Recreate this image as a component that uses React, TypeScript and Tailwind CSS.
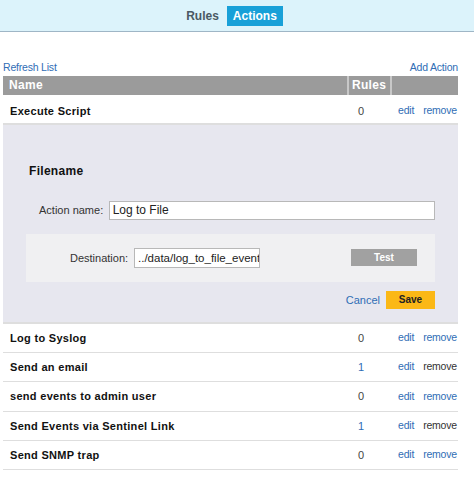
import React from "react";

type Action = { name: string; rules: number };

const actions: Action[] = [
  { name: "Log to Syslog", rules: 0 },
  { name: "Send an email", rules: 1 },
  { name: "send events to admin user", rules: 0 },
  { name: "Send Events via Sentinel Link", rules: 1 },
  { name: "Send SNMP trap", rules: 0 },
];

function RowLinks({ rules }: { rules: number }) {
  return (
    <>
      <div className="w-[43px] pl-[9px] text-[11px]">
        {rules > 0 ? (
          <span className="text-[#2f6db5]">{rules}</span>
        ) : (
          <span className="text-[#444]">{rules}</span>
        )}
      </div>
      <div className="flex flex-1 items-center gap-[9px] pl-[6px] text-[10.5px] tracking-[-0.2px]">
        <span className="text-[#2f6db5]">edit</span>
        {rules > 0 ? (
          <span className="text-[#333]">remove</span>
        ) : (
          <span className="text-[#2f6db5]">remove</span>
        )}
      </div>
    </>
  );
}

function ActionRow({ action }: { action: Action }) {
  return (
    <div className="flex h-[29.3px] items-center border-b border-[#dedede] text-[11px]">
      <div className="w-[346px] pl-[7px] font-bold tracking-[0.3px] text-[#111]">
        {action.name}
      </div>
      <RowLinks rules={action.rules} />
    </div>
  );
}

export default function App() {
  return (
    <div
      className="min-h-screen bg-white text-[11px] text-[#333]"
      style={{ fontFamily: '"Liberation Sans", Arial, sans-serif' }}
    >
      {/* Top tabs */}
      <div className="flex h-[32px] items-center justify-center border-b border-[#9fb6c6] bg-[#dcf3fb] pr-[13px]">
        <span className="px-[8px] text-[12px] font-bold text-[#4b5963]">Rules</span>
        <span className="bg-[#18a0d8] px-[6px] py-[1px] text-[12px] font-bold text-white">
          Actions
        </span>
      </div>

      <div className="ml-[3px] mr-[16px] mt-[28px]">
        <div className="flex items-end justify-between text-[10.5px] tracking-[-0.2px] text-[#2f6db5]">
          <span>Refresh List</span>
          <span>Add Action</span>
        </div>

        {/* Table header */}
        <div className="flex h-[19px] items-stretch bg-[#9b9b9b] text-[12px] font-bold tracking-[0.3px] text-white">
          <div className="flex w-[346px] items-center border-r-2 border-[#c8c8c8] pl-[6px]">
            Name
          </div>
          <div className="flex w-[43px] items-center border-r-2 border-[#c8c8c8] pl-[3px]">
            Rules
          </div>
          <div className="flex-1" />
        </div>

        {/* Execute Script row */}
        <div className="flex h-[30px] items-center border-b-2 border-[#dedede] pt-[4px]">
          <div className="w-[346px] pl-[7px] font-bold tracking-[0.3px] text-[#111]">
            Execute Script
          </div>
          <RowLinks rules={0} />
        </div>

        {/* Edit panel */}
        <div className="border-b-2 border-[#dedede] bg-[#e7e7ef] pb-[13px] pl-[23px] pr-[23px] pt-[37px]">
          <div className="pl-[3px] text-[12px] font-bold tracking-[0.3px] text-[#111]">
            Filename
          </div>
          <div className="mt-[21px] flex items-center pl-[13px]">
            <span className="w-[70px] text-[#333]">Action name:</span>
            <input
              readOnly
              value="Log to File"
              className="h-[19px] w-[328px] border border-[#b8b8b8] bg-white pl-[3px] text-[12px] text-[#222] outline-none"
            />
          </div>
          <div className="mt-[14px] flex h-[48px] items-center bg-[#f0f0f2] pl-[44px]">
            <span className="w-[64px] text-[#333]">Destination:</span>
            <input
              readOnly
              value="../data/log_to_file_event"
              className="h-[20px] w-[126px] border border-[#b8b8b8] bg-white pl-[3px] text-[11.5px] text-[#222] outline-none"
            />
            <div className="ml-[91px] flex h-[17px] w-[66px] items-center justify-center bg-[#a1a1a1] text-[10px] font-bold text-white">
              Test
            </div>
          </div>
          <div className="mt-[9px] flex items-center justify-end">
            <span className="text-[11px] text-[#2f6db5]">Cancel</span>
            <div className="ml-[6px] flex h-[18px] w-[49px] items-center justify-center bg-[#fbb816] text-[10px] font-bold text-[#222]">
              Save
            </div>
          </div>
        </div>

        {actions.map((a) => (
          <ActionRow key={a.name} action={a} />
        ))}
      </div>
    </div>
  );
}
